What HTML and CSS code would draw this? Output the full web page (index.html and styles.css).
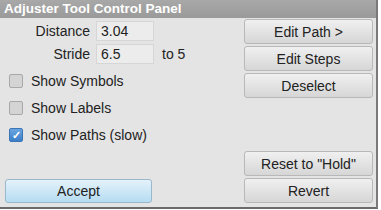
FILE: index.html
```html
<!DOCTYPE HTML>
<html>
<head>
  <meta charset="UTF-8">
  <title>Adjuster Tool Control Panel</title>
  <link rel="stylesheet" href="styles.css">
</head>
<body>
  <div class="panel">
    <div class="title">Adjuster Tool Control Panel</div>
    <div class="content">
      <div class="left">
        <div class="field">
          <span class="label">Distance</span>
          <span class="box">3.04</span>
        </div>
        <div class="field">
          <span class="label">Stride</span>
          <span class="box">6.5</span>
          <span class="suffix">to 5</span>
        </div>
        <div class="checks">
          <label class="check"><span class="tick"></span>Show Symbols</label>
          <label class="check"><span class="tick"></span>Show Labels</label>
          <label class="check"><span class="tick on">&#10003;</span>Show Paths (slow)</label>
        </div>
        <button class="btn accept">Accept</button>
      </div>
      <div class="right">
        <button class="btn">Edit Path &gt;</button>
        <button class="btn">Edit Steps</button>
        <button class="btn">Deselect</button>
        <div class="spacer"></div>
        <button class="btn">Reset to "Hold"</button>
        <button class="btn">Revert</button>
      </div>
    </div>
  </div>
</body>
</html>
```

FILE: styles.css
```css
body {
  margin: 0;
  background: #fff;
  font-family: "Liberation Sans", Arial, sans-serif;
  font-size: 14px;
  color: #222;
}

.panel {
  width: 376px;
  height: 207px;
  background: #e4e4e4;
  border-right: 2px solid #7a7a7a;
  border-bottom: 2px solid #6a6a6a;
  display: flex;
  flex-direction: column;
}

.title {
  height: 18px;
  line-height: 18px;
  padding-left: 4px;
  background: linear-gradient(#a8a8a8, #9a9a9a);
  color: #fff;
  font-weight: bold;
  font-size: 13.5px;
}

.content {
  flex: 1;
  display: flex;
  padding: 1px 3px 4px 5px;
}

.left {
  flex: 1;
  display: flex;
  flex-direction: column;
}

.field {
  display: flex;
  align-items: center;
  height: 23px;
}

.label {
  width: 85px;
  text-align: right;
  margin-right: 6px;
}

.box {
  width: 52px;
  height: 18px;
  line-height: 18px;
  padding-left: 4px;
  background: #ececec;
  border: 1px solid #d6d6d6;
}

.suffix {
  margin-left: 8px;
}

.checks {
  margin-top: 2px;
}

.check {
  display: flex;
  align-items: center;
  height: 27px;
  padding-left: 4px;
}

.tick {
  width: 12px;
  height: 12px;
  margin-right: 8px;
  border: 1px solid #a8a8a8;
  border-radius: 2px;
  background: #d4d4d4;
  font-size: 11px;
  line-height: 12px;
  text-align: center;
  color: #fff;
}

.tick.on {
  background: linear-gradient(#6aa6e0, #3c7fc8);
  border-color: #3b75b5;
  font-weight: bold;
}

.btn {
  display: block;
  height: 25px;
  padding: 0;
  font-family: inherit;
  font-size: 14px;
  color: #222;
  border: 1px solid #b8b8b8;
  border-radius: 3px;
  background: linear-gradient(#f0f0f0, #d6d6d6);
}

.accept {
  margin-top: auto;
  width: 147px;
  height: 24px;
  background: linear-gradient(#e4f2fb, #b6dcf2);
  border-color: #9ab8cc;
}

.right {
  width: 129px;
  display: flex;
  flex-direction: column;
  gap: 2px;
}

.right .btn {
  width: 129px;
}

.spacer {
  flex: 1;
}
```
